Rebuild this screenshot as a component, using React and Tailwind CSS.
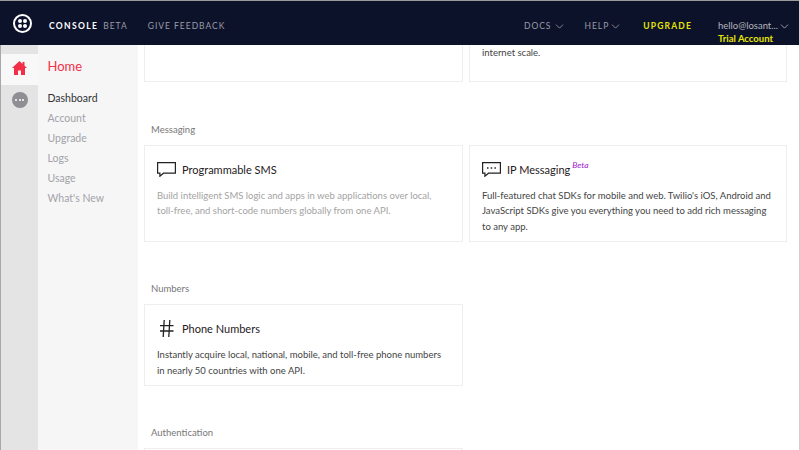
import { ChevronDown } from "lucide-react";

const font = "font-['Lato','Open_Sans',sans-serif]";

const menu = ["Account", "Upgrade", "Logs", "Usage", "What's New"];

function Chevron({ className }) {
  return <ChevronDown size={13} strokeWidth={1.5} className={className} />;
}

function Card({ icon, title, badge, muted, bodyGap = "mt-[6.5px]", children }) {
  return (
    <div className="h-full border border-[#eeeeee] bg-white pl-[12px] pr-[14px] pt-[12px]">
      <div className="flex h-[23px] items-center">
        <div className="flex w-[25px] shrink-0">{icon}</div>
        <h3 className="text-[11px] leading-none text-[#1f2023]">{title}</h3>
        {badge && <span className="relative top-[-4px] ml-[2px] text-[8.5px] italic text-[#a020c8]">{badge}</span>}
      </div>
      <p className={`${bodyGap} text-[9.5px] leading-[15.5px] ${muted ? "text-[#a3a3a3]" : "text-[#444444]"}`}>
        {children}
      </p>
    </div>
  );
}

function SmsIcon({ dots }) {
  return (
    <svg width="19" height="15" viewBox="0 0 19 15" fill="none" stroke="#222" strokeWidth="1.2">
      <path d="M.6.6h17.8v10.6H6.5l-3.6 3v-3H.6z" />
      {dots && <path d="M5 6h1.5M8.7 6h1.5M12.4 6h1.5" strokeWidth="1.7" />}
    </svg>
  );
}

function HashIcon() {
  return (
    <svg width="17" height="17" viewBox="0 0 17 17" fill="none" stroke="#222" strokeWidth="1.3" className="-mt-[1px]">
      <path d="M7.2 0 6.2 17M12.8 0l-1 17M3 5.6h13.5M3 11h13.5" />
    </svg>
  );
}

function SectionLabel({ children, className }) {
  return <div className={`ml-[7px] h-[14px] text-[9.5px] leading-[14px] text-[#777777] ${className}`}>{children}</div>;
}

export default function App() {
  return (
    <div className={`flex h-[450px] w-[800px] flex-col overflow-hidden border-r border-[#d0d0d0] bg-white ${font}`}>
      <header className="flex h-[45px] shrink-0 items-center border-t border-[#9a9a9a] bg-[#0d122b] text-[8.5px] tracking-[0.115em] text-[#9a9ca6]">
        <div className="ml-[13px] flex h-[19px] w-[19px] items-center justify-center rounded-full border-[2.5px] border-white">
          <div className="grid grid-cols-2 gap-[1px]">
            <span className="h-[4px] w-[4px] rounded-full bg-white" />
            <span className="h-[4px] w-[4px] rounded-full bg-white" />
            <span className="h-[4px] w-[4px] rounded-full bg-white" />
            <span className="h-[4px] w-[4px] rounded-full bg-white" />
          </div>
        </div>
        <div className="ml-[17px] mt-[6px] flex flex-1 items-center">
          <span className="font-bold tracking-[0.16em] text-white">CONSOLE</span>
          <span className="ml-[5px]">BETA</span>
          <span className="ml-[20px]">GIVE FEEDBACK</span>
          <div className="ml-auto flex items-center">
            <span>DOCS</span>
            <Chevron className="ml-[2px]" />
            <span className="ml-[18px]">HELP</span>
            <Chevron className="ml-[0px]" />
            <span className="ml-[21px] font-bold tracking-[0.14em] text-[#e6e600]">UPGRADE</span>
            <div className="relative ml-[26px] mr-[8px] flex items-center text-[9.5px] tracking-normal text-[#b4b5bc]">
              <span>hello@losant...</span>
              <Chevron />
              <span className="absolute left-0 top-[13px] whitespace-nowrap text-[9.5px] font-bold text-[#e6e600]">Trial Account</span>
            </div>
          </div>
        </div>
      </header>

      <div className="flex min-h-0 flex-1">
        <nav className="w-[38px] shrink-0 border-l border-[#a8a8a8] bg-[#e4e4e4] pt-[9px]">
          <div className="flex h-[31px] items-center justify-center bg-[#f8f8f8]">
            <svg width="15" height="14" viewBox="0 0 15 14" fill="#f22f46" className="mb-[3px]">
              <path d="M7.5 0 0 7h2v7h4V9.5h3V14h4V7h2l-2.5-2.3V1h-2v1.9z" />
            </svg>
          </div>
          <div className="mt-[7px] flex justify-center">
            <div className="flex h-[16px] w-[16px] items-center justify-center gap-[1.5px] rounded-full bg-[#8e8e93]">
              <span className="h-[2px] w-[2px] rounded-full bg-white" />
              <span className="h-[2px] w-[2px] rounded-full bg-white" />
              <span className="h-[2px] w-[2px] rounded-full bg-white" />
            </div>
          </div>
        </nav>

        <aside className="w-[100px] shrink-0 bg-[#f6f6f7] pl-[9.5px] pt-[12px]">
          <div className="text-[13px] leading-[18px] text-[#f22f46]">Home</div>
          <div className="mt-[13px] text-[10.5px] leading-[20px] text-[#333333]">Dashboard</div>
          {menu.map((item) => (
            <div key={item} className="text-[10.5px] leading-[20px] text-[#a3a3a8]">{item}</div>
          ))}
        </aside>

        <main className="min-w-0 flex-1 pl-[6px]">
          <div className="grid grid-cols-[319px_318px] gap-x-[6px]">
            <div className="h-[37px] border border-t-0 border-[#eeeeee]" />
            <div className="h-[37px] border border-t-0 border-[#eeeeee] pl-[12px] pt-[1px] text-[9.5px] leading-[13px] text-[#444444]">internet scale.</div>
          </div>

          <SectionLabel className="mt-[41px]">Messaging</SectionLabel>
          <div className="mt-[8px] grid h-[97px] grid-cols-[319px_318px] gap-x-[6px]">
            <Card icon={<SmsIcon />} title="Programmable SMS" muted>
              Build intelligent SMS logic and apps in web applications over local, toll-free, and short-code numbers globally from one API.
            </Card>
            <Card icon={<SmsIcon dots />} title="IP Messaging" badge="Beta">
              Full-featured chat SDKs for mobile and web. Twilio's iOS, Android and JavaScript SDKs give you everything you need to add rich messaging to any app.
            </Card>
          </div>

          <SectionLabel className="mt-[40px]">Numbers</SectionLabel>
          <div className="mt-[8px] grid h-[82px] grid-cols-[319px_318px] gap-x-[6px]">
            <Card icon={<HashIcon />} title="Phone Numbers" bodyGap="mt-[7px]">
              Instantly acquire local, national, mobile, and toll-free phone numbers in nearly 50 countries with one API.
            </Card>
          </div>

          <SectionLabel className="mt-[40px]">Authentication</SectionLabel>
          <div className="mt-[8px] h-[40px] w-[319px] border border-[#eeeeee]" />
        </main>
      </div>
    </div>
  );
}
